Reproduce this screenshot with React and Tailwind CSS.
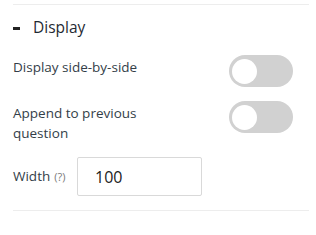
export default function App() {
  const Toggle = () => (
    <div className="mt-[4px] w-[64px] h-[32px] rounded-full bg-[#d1d1d1] flex items-center px-[3px] shrink-0">
      <div className="w-[25px] h-[25px] rounded-full bg-white" />
    </div>
  );
  return (
    <div className="w-[316px] h-[235px] bg-white text-[#333e48]" style={{ fontFamily: '"Open Sans", "Noto Sans", sans-serif' }}>
      <div className="ml-[13px] mr-[7px] pt-[4px]">
        <div className="border-t border-[#ededed]" />
        <div className="flex items-center h-[46px]">
          <div className="w-[7px] h-[3px] bg-[#222]" />
          <span className="ml-[13px] text-[15.5px] text-[#1f2a33]">Display</span>
        </div>
        <div className="flex items-start justify-between pr-[16px] h-[46px]">
          <span className="mt-[6px] text-[13.5px] leading-[20px]">Display side-by-side</span>
          <Toggle />
        </div>
        <div className="flex items-start justify-between pr-[16px] h-[46px]">
          <span className="mt-[6px] text-[13.5px] leading-[20px] w-[140px]">Append to previous question</span>
          <Toggle />
        </div>
        <div className="flex items-center mt-[14px]">
          <div className="w-[64px] flex items-center">
            <span className="text-[13.5px]">Width</span>
            <span className="ml-[4px] text-[11px] text-[#7a7a7a] mt-[2px]">(?)</span>
          </div>
          <div className="w-[125px] h-[39px] border border-[#d9d9d9] rounded-[2px] flex items-center pl-[17px] text-[16px] text-[#222]">100</div>
        </div>
        <div className="border-t border-[#ededed] mt-[14px]" />
      </div>
    </div>
  );
}
